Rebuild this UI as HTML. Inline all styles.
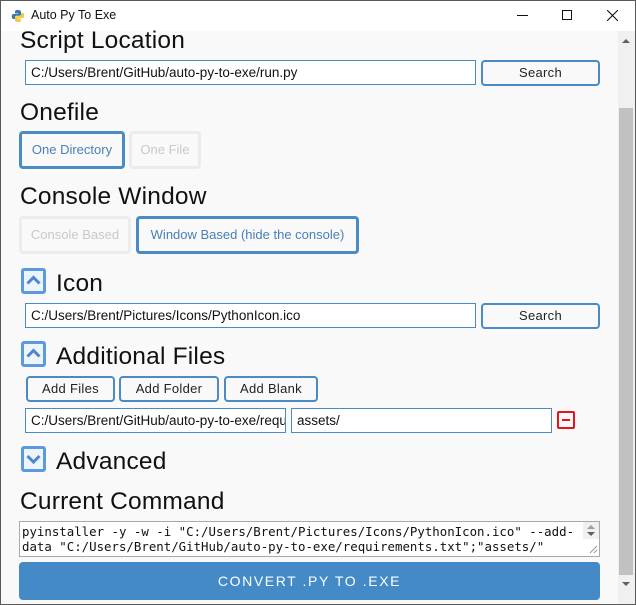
<!DOCTYPE html>
<html><head><meta charset="utf-8"><style>
*{box-sizing:border-box;margin:0;padding:0}
body{width:636px;height:605px;position:relative;overflow:hidden;background:#fff;font-family:"Liberation Sans",sans-serif}
.win{position:absolute;left:0;top:0;width:636px;height:605px;border:1px solid #5a5a5a}
.title{position:absolute;left:1px;top:1px;width:634px;height:30px;background:#fff}
.content{position:absolute;left:1px;top:31px;width:617px;height:573px;background:#f9f9f9}
.sb{position:absolute;left:618px;top:31px;width:17px;height:573px;background:#f0f0f0}
.a{position:absolute}
h2{position:absolute;font-weight:normal;font-size:24.5px;color:#111;left:20px;line-height:1;letter-spacing:.2px}
.inp{position:absolute;background:#fff;border:1px solid #4a8bc6;font-size:13.5px;color:#111;padding-left:5px;line-height:23px;white-space:nowrap;overflow:hidden}
.btn{position:absolute;border:2px solid #4a8bc6;border-radius:4px;background:#f9f9f9;font-size:13px;color:#222;text-align:center;letter-spacing:.3px}
.tog{position:absolute;border:3px solid #4a8bc6;border-radius:4px;font-size:13px;color:#4a7fb8;text-align:center}
.off{border-color:#ececec;color:#c9c9c9}
.chev{position:absolute;width:25px;height:26px;border:3px solid #5b9ae0;border-radius:3px;background:#eef4fb}
</style></head><body>
<div class="win"></div>
<div class="title">
<svg class="a" style="left:10px;top:8px" width="14" height="14" viewBox="0 0 14 14"><path d="M7 1C4 1 4 2 4 3v1.5h3.2V5H2.5C1.2 5 .8 6.3.8 7.5S1.2 10 2.5 10H4V8.3C4 7.3 4.8 6.7 5.7 6.7h3C9.5 6.7 10 6 10 5.3V3c0-1-1-2-3-2z" fill="#3d75b0"/><path d="M7 13c3 0 3-1 3-2V9.5H6.8V9h4.7c1.3 0 1.7-1.3 1.7-2.5S12.8 4 11.5 4H10v1.7c0 1-.8 1.6-1.7 1.6h-3C4.5 7.3 4 8 4 8.7V11c0 1 1 2 3 2z" fill="#f5c93a"/></svg>
<div class="a" style="left:30px;top:7px;font-size:12.5px;color:#111">Auto Py To Exe</div>
<div class="a" style="left:516px;top:14px;width:11px;height:1px;background:#111"></div>
<div class="a" style="left:561px;top:9px;width:10px;height:10px;border:1px solid #111"></div>
<svg class="a" style="left:606px;top:9px" width="11" height="11"><path d="M0 0L11 11M11 0L0 11" stroke="#111" stroke-width="1.1"/></svg>
</div>
<div class="content"></div>
<div class="sb"><div class="a" style="left:4px;top:8px;width:0;height:0;border-left:4px solid transparent;border-right:4px solid transparent;border-bottom:4px solid #606060"></div>
<div class="a" style="left:1px;top:77px;width:14px;height:467px;background:#c1c1c1"></div>
<div class="a" style="left:4px;top:551px;width:0;height:0;border-left:4px solid transparent;border-right:4px solid transparent;border-top:4px solid #606060"></div></div>

<h2 style="top:29px">Script Location</h2>
<div class="inp" style="left:25px;top:60px;width:451px;height:25px">C:/Users/Brent/GitHub/auto-py-to-exe/run.py</div>
<div class="btn" style="left:481px;top:60px;width:119px;height:26px;line-height:22px">Search</div>

<h2 style="top:101px">Onefile</h2>
<div class="tog" style="left:19px;top:131px;width:106px;height:38px;line-height:32px">One Directory</div>
<div class="tog off" style="left:129px;top:131px;width:72px;height:38px;line-height:32px">One File</div>

<h2 style="top:185px">Console Window</h2>
<div class="tog off" style="left:19px;top:216px;width:112px;height:38px;line-height:32px">Console Based</div>
<div class="tog" style="left:136px;top:216px;width:223px;height:38px;line-height:32px">Window Based (hide the console)</div>

<div class="chev" style="left:21px;top:268px"><svg width="19" height="20" style="position:absolute;left:0;top:0"><path d="M3.5 12.5L9.5 6.5L15.5 12.5" stroke="#4a87d0" stroke-width="3" fill="none"/></svg></div>
<h2 style="left:56px;top:272px">Icon</h2>
<div class="inp" style="left:25px;top:303px;width:451px;height:25px">C:/Users/Brent/Pictures/Icons/PythonIcon.ico</div>
<div class="btn" style="left:481px;top:303px;width:119px;height:26px;line-height:22px">Search</div>

<div class="chev" style="left:21px;top:341px"><svg width="19" height="20" style="position:absolute;left:0;top:0"><path d="M3.5 12.5L9.5 6.5L15.5 12.5" stroke="#4a87d0" stroke-width="3" fill="none"/></svg></div>
<h2 style="left:56px;top:345px">Additional Files</h2>
<div class="btn" style="left:26px;top:376px;width:89px;height:26px;line-height:22px">Add Files</div>
<div class="btn" style="left:119px;top:376px;width:100px;height:26px;line-height:22px">Add Folder</div>
<div class="btn" style="left:224px;top:376px;width:94px;height:26px;line-height:22px">Add Blank</div>
<div class="inp" style="left:25px;top:408px;width:261px;height:25px">C:/Users/Brent/GitHub/auto-py-to-exe/requirements.txt</div>
<div class="inp" style="left:291px;top:408px;width:261px;height:25px">assets/</div>
<div class="a" style="left:557px;top:411px;width:18px;height:18px;border:2px solid #e8121c;border-radius:2px"><div class="a" style="left:3px;top:6px;width:8px;height:2px;background:#e8121c"></div></div>

<div class="chev" style="left:21px;top:446px"><svg width="19" height="20" style="position:absolute;left:0;top:0"><path d="M3.5 7L9.5 13L15.5 7" stroke="#4a87d0" stroke-width="3" fill="none"/></svg></div>
<h2 style="left:56px;top:450px">Advanced</h2>

<h2 style="top:490px">Current Command</h2>
<div class="a" style="left:19px;top:521px;width:581px;height:36px;background:#fff;border:1px solid #a9a9a9;font-family:'DejaVu Sans Mono',monospace;font-size:12.4px;line-height:15px;color:#111;padding:2px 0 0 2px;white-space:pre">pyinstaller -y -w -i "C:/Users/Brent/Pictures/Icons/PythonIcon.ico" --add-
data "C:/Users/Brent/GitHub/auto-py-to-exe/requirements.txt";"assets/"</div>
<div class="a" style="left:583px;top:522px;width:16px;height:17px;background:#f0f0f0"><div class="a" style="left:4px;top:3px;border-left:4px solid transparent;border-right:4px solid transparent;border-bottom:4px solid #a0a0a0"></div><div class="a" style="left:4px;top:10px;border-left:4px solid transparent;border-right:4px solid transparent;border-top:4px solid #606060"></div></div>
<svg class="a" style="left:588px;top:544px" width="10" height="10"><path d="M9 2L2 9M9 6L6 9" stroke="#999" stroke-width="1"/></svg>
<div class="a" style="left:19px;top:562px;width:581px;height:38px;background:#448ac6;border-radius:4px;color:#fff;font-size:14px;letter-spacing:1.6px;text-align:center;line-height:38px">CONVERT .PY TO .EXE</div>
</body></html>
